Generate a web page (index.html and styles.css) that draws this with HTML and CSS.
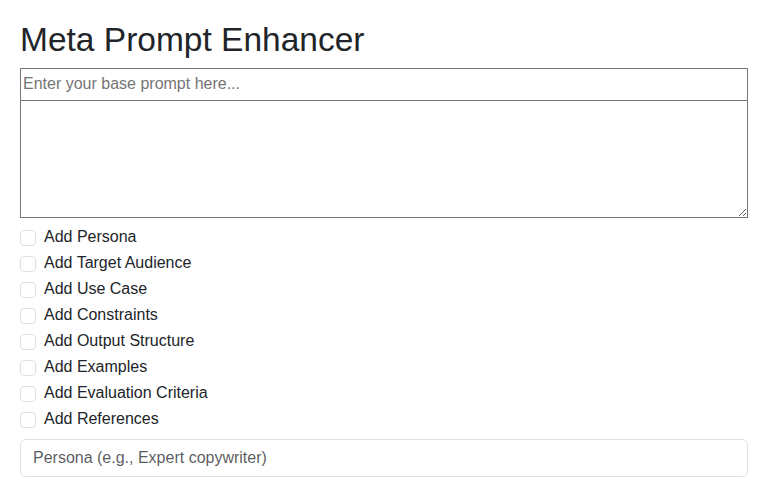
FILE: index.html
```html
<!DOCTYPE html>
<html lang="en">
<head>
<meta charset="utf-8">
<title>Meta Prompt Enhancer</title>
<link rel="stylesheet" href="styles.css">
</head>
<body>
<div class="container">
  <h1 class="title">Meta Prompt Enhancer</h1>
  <div class="prompt-box">
    <input class="prompt-head" type="text" placeholder="Enter your base prompt here...">
    <textarea class="prompt-body"></textarea>
  </div>
  <div class="options">
    <label class="form-check"><input class="check" type="checkbox"><span>Add Persona</span></label>
    <label class="form-check"><input class="check" type="checkbox"><span>Add Target Audience</span></label>
    <label class="form-check"><input class="check" type="checkbox"><span>Add Use Case</span></label>
    <label class="form-check"><input class="check" type="checkbox"><span>Add Constraints</span></label>
    <label class="form-check"><input class="check" type="checkbox"><span>Add Output Structure</span></label>
    <label class="form-check"><input class="check" type="checkbox"><span>Add Examples</span></label>
    <label class="form-check"><input class="check" type="checkbox"><span>Add Evaluation Criteria</span></label>
    <label class="form-check"><input class="check" type="checkbox"><span>Add References</span></label>
  </div>
  <input class="form-control" type="text" placeholder="Persona (e.g., Expert copywriter)">
</div>
</body>
</html>
```
FILE: styles.css
```css
* { box-sizing: border-box; }
html, body { margin: 0; padding: 0; background: #fff; }
body {
  font-family: "Liberation Sans", Arial, sans-serif;
  font-size: 16px;
  line-height: 1.5;
  color: #212529;
}
.container { padding: 20px 20px 0; }
.title {
  margin: 0 0 8px;
  font-size: 33.5px;
  font-weight: 500;
  line-height: 40px;
}
.prompt-box { margin-bottom: 7px; }
.prompt-head, .prompt-body {
  display: block;
  width: 100%;
  margin: 0;
  font-family: inherit;
  font-size: 16px;
  line-height: 24px;
  color: #212529;
  border: 1px solid #767676;
  padding: 2px;
  background: #fff;
  outline: none;
}
.prompt-head { height: 33px; padding-top: 1px; padding-bottom: 3px; }
.prompt-head::placeholder { color: #757575; }
.prompt-body {
  height: 117px;
  border-top: none;
  resize: vertical;
}
.options { display: flex; flex-direction: column; gap: 2px; }
.form-check {
  display: flex;
  align-items: flex-start;
  gap: 8px;
  min-height: 24px;
}
.check {
  appearance: none;
  -webkit-appearance: none;
  width: 16px;
  height: 16px;
  margin: 5px 0 0;
  flex: none;
  border: 1px solid #dee2e6;
  border-radius: 4px;
  background: #fff;
}
.form-control {
  display: block;
  width: 100%;
  height: 38px;
  margin-top: 8px;
  padding: 6px 12px;
  font-family: inherit;
  font-size: 16px;
  line-height: 24px;
  color: #212529;
  border: 1px solid #dee2e6;
  border-radius: 6px;
  background: #fff;
  outline: none;
}
.form-control::placeholder { color: rgba(33, 37, 41, 0.75); }
```
